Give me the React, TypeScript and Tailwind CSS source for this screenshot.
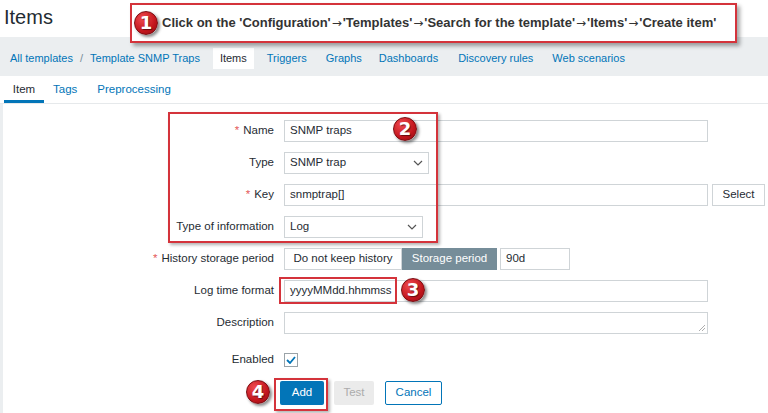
import React from "react";

const Badge = ({ n, className }: { n: string; className: string }) => (
  <div
    className={`absolute w-[24px] h-[24px] rounded-full border border-[#7a0d12] bg-[radial-gradient(circle_at_35%_30%,#ef4a4f,#c3161d_60%,#8e0c12)] shadow-[2px_2px_3px_rgba(0,0,0,0.45)] flex items-center justify-center ${className}`}
  >
    <span className="text-white font-bold text-[18px] leading-none [font-family:'DejaVu_Sans',sans-serif] [text-shadow:1px_1px_1px_rgba(0,0,0,0.5)]">
      {n}
    </span>
  </div>
);

const Chevron = () => (
  <svg width="10" height="6" viewBox="0 0 10 6" className="text-[#555]">
    <path d="M1 1l4 4 4-4" fill="none" stroke="currentColor" strokeWidth="1.2" />
  </svg>
);

const Label = ({ text, req }: { text: string; req?: boolean }) => (
  <div className="w-[281px] pr-[10px] text-right text-[#1f2c33] shrink-0">
    {req && <span className="text-[#e45959] mr-[4px]">*</span>}
    {text}
  </div>
);

const Arrow = () => <span className="[font-family:'DejaVu_Sans',sans-serif] font-normal text-[12px] mx-[1px]">→</span>;

export default function App() {
  return (
    <div className="w-[768px] h-[413px] overflow-hidden bg-white relative text-[11.5px] text-[#1f2c33] [font-family:'Liberation_Sans',Arial,sans-serif]">
      {/* header */}
      <div className="h-[37px] relative">
        <div className="pl-[4px] pt-[5px] text-[20px] leading-[24px] text-[#1f2c33]">Items</div>
      </div>
      {/* nav */}
      <div className="h-[39px] bg-[#ebeef0] flex items-center pt-[3px] pl-[10px] text-[11px] text-[#0275b8]">
        <span>All templates</span>
        <span className="text-[#768d99] mx-[7px]">/</span>
        <span>Template SNMP Traps</span>
        <span className="ml-[13px] bg-white text-[#1f2c33] h-[21px] leading-[21px] px-[7px]">Items</span>
        <span className="ml-[13px]">Triggers</span>
        <span className="ml-[19px]">Graphs</span>
        <span className="ml-[17px]">Dashboards</span>
        <span className="ml-[20px]">Discovery rules</span>
        <span className="ml-[19px]">Web scenarios</span>
      </div>
      {/* tabs */}
      <div className="h-[28px] flex items-stretch border-b border-[#e6e9eb] text-[11.5px]">
        <div className="ml-[4px] w-[40px] flex items-center justify-center border-b-[3px] border-[#0275b8] pt-[3px] text-[#1f2c33]">Item</div>
        <div className="ml-[9px] flex items-center text-[#0275b8]">Tags</div>
        <div className="ml-[20px] flex items-center text-[#0275b8]">Preprocessing</div>
      </div>
      {/* form */}
      <div className="relative border-l-[3px] border-[#ebeef0] h-[309px] pt-[16px] flex flex-col gap-[10px]">
        <div className="flex items-center h-[22px]">
          <Label text="Name" req />
          <div className="w-[424px] h-[22px] border border-[#cfd4d7] px-[5px] flex items-center">SNMP traps</div>
        </div>
        <div className="flex items-center h-[22px]">
          <Label text="Type" />
          <div className="w-[145px] h-[22px] border border-[#cfd4d7] px-[5px] flex items-center justify-between">
            <span>SNMP trap</span>
            <Chevron />
          </div>
        </div>
        <div className="flex items-center h-[22px]">
          <Label text="Key" req />
          <div className="w-[424px] h-[22px] border border-[#cfd4d7] px-[5px] flex items-center">snmptrap[]</div>
          <div className="ml-[4px] w-[53px] h-[22px] border border-[#cfd4d7] flex items-center justify-center">Select</div>
        </div>
        <div className="flex items-center h-[22px]">
          <Label text="Type of information" />
          <div className="w-[139px] h-[22px] border border-[#cfd4d7] px-[5px] flex items-center justify-between">
            <span>Log</span>
            <Chevron />
          </div>
        </div>
        <div className="flex items-center h-[22px]">
          <Label text="History storage period" req />
          <div className="w-[118px] h-[22px] border border-[#cfd4d7] flex items-center justify-center">Do not keep history</div>
          <div className="w-[95px] h-[22px] bg-[#768d99] text-white flex items-center justify-center">Storage period</div>
          <div className="ml-[3px] w-[70px] h-[22px] border border-[#cfd4d7] px-[5px] flex items-center">90d</div>
        </div>
        <div className="flex items-center h-[22px]">
          <Label text="Log time format" />
          <div className="w-[424px] h-[22px] border border-[#cfd4d7] px-[5px] flex items-center">yyyyMMdd.hhmmss</div>
        </div>
        <div className="flex items-center h-[22px]">
          <Label text="Description" />
          <div className="w-[424px] h-[22px] border border-[#cfd4d7] relative">
            <svg width="8" height="8" viewBox="0 0 8 8" className="absolute right-[1px] bottom-[1px]">
              <path d="M7 1L1 7M7 4L4 7" stroke="#999" strokeWidth="0.8" />
            </svg>
          </div>
        </div>
        <div className="flex items-center h-[22px] mt-[5px]">
          <Label text="Enabled" />
          <div className="w-[14px] h-[14px] border border-[#9aa3a8] flex items-center justify-center">
            <svg width="10" height="8" viewBox="0 0 10 8">
              <path d="M1 4l3 3 5-6" fill="none" stroke="#0275b8" strokeWidth="1.8" />
            </svg>
          </div>
        </div>
        <div className="flex items-center h-[24px] pl-[277px]">
          <div className="w-[44px] h-[24px] bg-[#0275b8] text-white flex items-center justify-center rounded-[2px]">Add</div>
          <div className="ml-[10px] w-[40px] h-[24px] bg-[#ebebeb] text-[#acacac] flex items-center justify-center rounded-[2px]">Test</div>
          <div className="ml-[11px] w-[57px] h-[24px] border border-[#0275b8] text-[#0275b8] flex items-center justify-center rounded-[2px]">Cancel</div>
        </div>
      </div>

      {/* annotation overlays */}
      <div className="absolute left-[130px] top-[3px] w-[607px] h-[40px] bg-white border-2 border-[#d4333b] shadow-[3px_3px_4px_rgba(0,0,0,0.35)] flex items-center pl-[30px]">
        <span className="font-bold text-[13px] whitespace-nowrap text-[#333] [font-family:'Liberation_Sans',Arial,sans-serif]">
          Click on the 'Configuration'<Arrow />'Templates'<Arrow />'Search for the template'<Arrow />'Items'<Arrow />'Create item'
        </span>
      </div>
      <Badge n="1" className="left-[134px] top-[11px]" />
      <div className="absolute left-[168px] top-[112px] w-[270px] h-[131px] border-2 border-[#d4333b] shadow-[2px_2px_3px_rgba(0,0,0,0.3)]" />
      <Badge n="2" className="left-[393px] top-[117px]" />
      <div className="absolute left-[279px] top-[277px] w-[118px] h-[27px] border-2 border-[#d4333b]" />
      <Badge n="3" className="left-[401px] top-[278px]" />
      <div className="absolute left-[274px] top-[378px] w-[54px] h-[33px] border-2 border-[#d4333b] shadow-[2px_2px_3px_rgba(0,0,0,0.3)]" />
      <Badge n="4" className="left-[246px] top-[380px]" />
    </div>
  );
}
